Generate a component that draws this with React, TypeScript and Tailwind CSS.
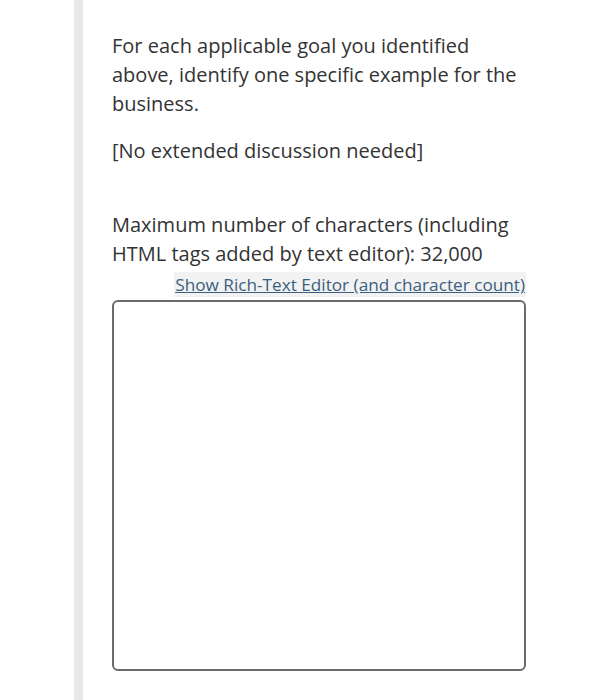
import React from "react";

const App: React.FC = () => {
    return (
        <div className="flex min-h-[700px] bg-white" style={{ fontFamily: '"Open Sans", sans-serif' }}>
            {/* left rail */}
            <div className="w-[74px] shrink-0" />
            <div className="w-[9px] shrink-0 bg-[#e8e8e8]" />

            {/* question body */}
            <div className="pl-[29px] pt-[31px] w-[443px] text-[20px] leading-[29px] text-[#333333]">
                <p>For each applicable goal you identified above, identify one specific example for the business.</p>
                <p className="mt-[18px]">[No extended discussion needed]</p>

                <p className="mt-[45px]">
                    Maximum number of characters (including HTML tags added by text editor): 32,000
                </p>
                <div className="flex justify-end mt-[4px]">
                    <a href="#" className="bg-[#f2f2f2] px-[1px] text-[17.2px] leading-[25px] text-[#3c5f7e] underline">
                        Show Rich-Text Editor (and character count)
                    </a>
                </div>
                <textarea className="block mt-[3px] w-[414px] h-[371px] rounded-[6px] border-2 border-[#6b6b6b] resize-none" />
            </div>
        </div>
    );
};

export default App;
